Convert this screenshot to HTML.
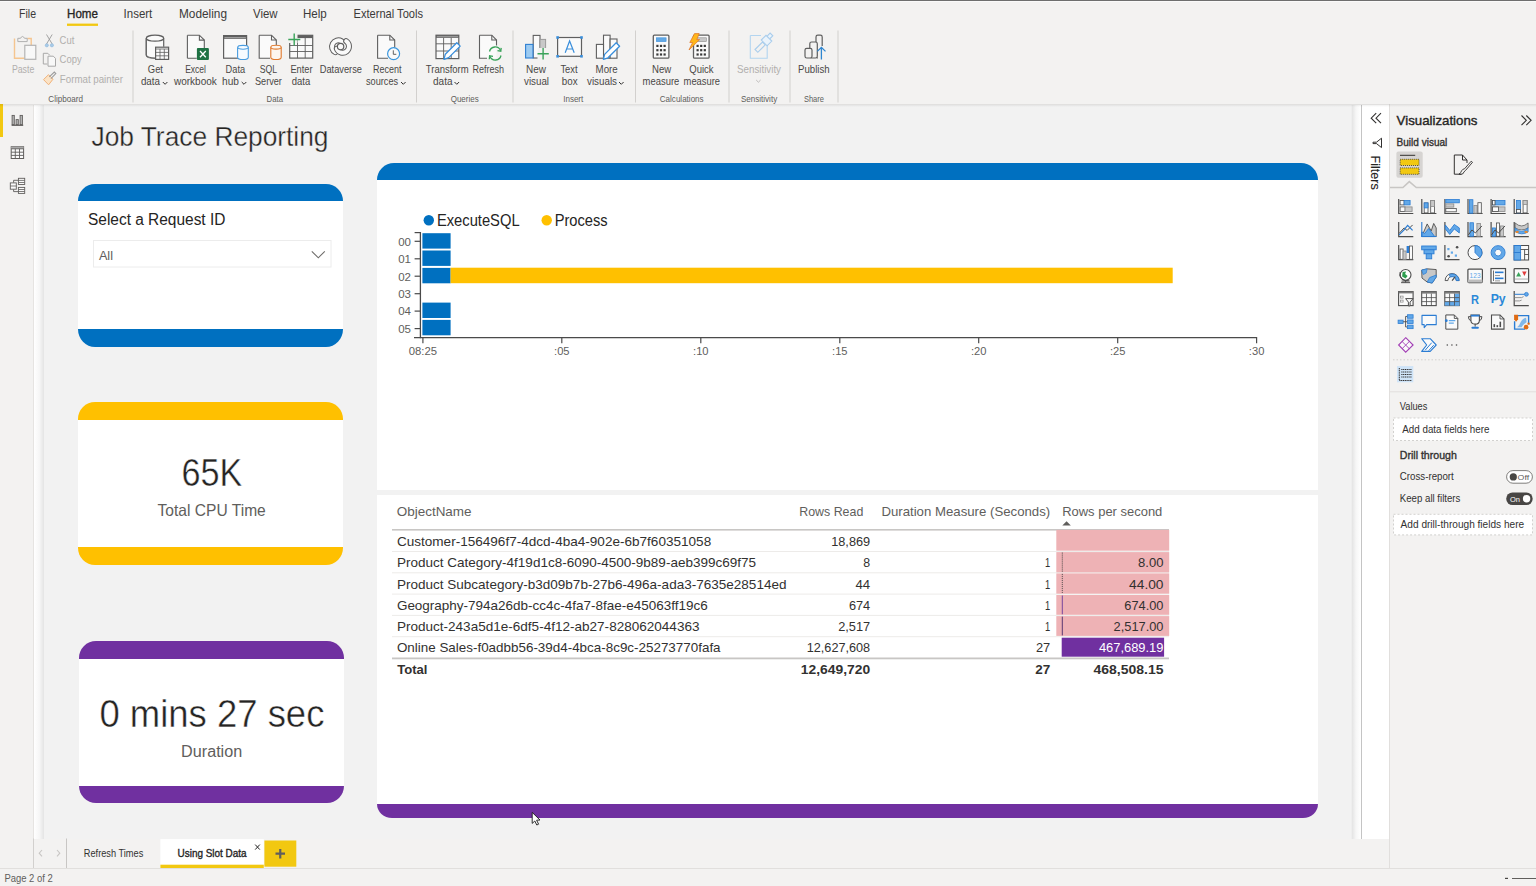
<!DOCTYPE html>
<html><head><meta charset="utf-8"><title>Job Trace Reporting - Power BI</title>
<style>
html,body{margin:0;padding:0;width:1536px;height:886px;overflow:hidden;background:#f3f2f1;font-family:"Liberation Sans", sans-serif;}
.abs{position:absolute;}
#topline{left:0;top:0;width:1536px;height:1px;background:#6e6e6e;}
#ribbon{left:0;top:1px;width:1536px;height:103px;background:#f3f2f1;border-top:1px solid #fafafa;box-sizing:border-box;}
#ribbonshadow{left:0;top:104px;width:1536px;height:3px;background:linear-gradient(rgba(0,0,0,0.09),rgba(0,0,0,0));z-index:5;}
#leftnav{left:0;top:105px;width:33px;height:763px;background:#f3f2f1;border-right:1px solid #e6e4e2;}
#navsel{left:0;top:104px;width:3px;height:33px;background:#f2c811;}
#canvasstrip{left:34px;top:105px;width:10px;height:734px;background:linear-gradient(90deg,#ffffff 0%,#f6f6f6 55%,#e6e6e6 95%,#f2f2f2 100%);}
#canvas{left:44px;top:105px;width:1308px;height:734px;background:#f2f2f2;}
#canvasR{left:1351px;top:105px;width:10px;height:734px;background:linear-gradient(90deg,#f2f2f2 0%,#e6e6e6 15%,#f6f6f6 50%,#ffffff 100%);}
#filterline{left:1361px;top:105px;width:1px;height:734px;background:#c4c4c4;}
#filters{left:1362px;top:105px;width:27px;height:734px;background:#ffffff;}
#vispane{left:1389px;top:104px;width:147px;height:764px;background:#f3f2f1;border-left:1px solid #e1dfdd;box-sizing:border-box;}
#tabbar{left:34px;top:839px;width:1355px;height:29px;background:#f3f2f1;}
#status{left:0;top:868px;width:1536px;height:18px;background:#f3f2f1;border-top:1px solid #e1dfdd;box-sizing:border-box;}
.card{position:absolute;background:#fff;box-sizing:border-box;}
#overlay{position:absolute;left:0;top:0;}
#overlay text{font-family:"Liberation Sans", sans-serif;}
</style></head><body>
<div id="topline" class="abs"></div>
<div id="ribbon" class="abs"></div>
<div id="ribbonshadow" class="abs"></div>
<div id="leftnav" class="abs"></div>
<div id="navsel" class="abs"></div>
<div id="canvasstrip" class="abs"></div>
<div id="canvas" class="abs"></div>
<div id="canvasR" class="abs"></div>
<div id="filterline" class="abs"></div>
<div id="filters" class="abs"></div>
<div id="vispane" class="abs"></div>
<div id="tabbar" class="abs"></div>
<div id="status" class="abs"></div>

<!-- slicer card -->
<div class="card" style="left:78px;top:184px;width:265px;height:163px;border-top:17.5px solid #0070c0;border-bottom:18.5px solid #0070c0;border-radius:17px 17px 17px 17px/17px 17px 18px 18px;"></div>
<!-- cpu card -->
<div class="card" style="left:78px;top:402px;width:265px;height:163px;border-top:18px solid #ffc000;border-bottom:18px solid #ffc000;border-radius:17px;"></div>
<!-- duration card -->
<div class="card" style="left:79px;top:641px;width:265px;height:162px;border-top:18px solid #7030a0;border-bottom:17px solid #7030a0;border-radius:17px;"></div>
<!-- big card -->
<div class="card" style="left:377px;top:163px;width:940.5px;height:654.5px;border-top:17.5px solid #0070c0;border-bottom:14.5px solid #7030a0;border-radius:17px 17px 15px 15px/17px 17px 14px 14px;"></div>
<div class="abs" style="left:377px;top:489.5px;width:940.5px;height:5.5px;background:#f2f2f2;"></div>

<svg id="overlay" width="1536" height="886" viewBox="0 0 1536 886">
<rect x="93.5" y="240.5" width="237.5" height="26.5" fill="#fff" stroke="#ececec" stroke-width="1"/>
<polyline points="311.8,251.3 318.3,257.8 324.8,251.3" fill="none" stroke="#6f6d6b" stroke-width="1.1"/>
<circle cx="428.8" cy="220.3" r="5.2" fill="#0070c0"/>
<circle cx="546.7" cy="220.3" r="5.2" fill="#ffc000"/>
<line x1="420.4" y1="232" x2="420.4" y2="338.2" stroke="#4a4a4a" stroke-width="1.3"/>
<line x1="414.6" y1="232.6" x2="420.4" y2="232.6" stroke="#4a4a4a" stroke-width="1.2"/>
<line x1="414" y1="337.6" x2="1256.5" y2="337.6" stroke="#4a4a4a" stroke-width="1.4"/>
<line x1="414.6" y1="241.3" x2="420.4" y2="241.3" stroke="#4a4a4a" stroke-width="1.2"/>
<line x1="414.6" y1="258.8" x2="420.4" y2="258.8" stroke="#4a4a4a" stroke-width="1.2"/>
<line x1="414.6" y1="276.2" x2="420.4" y2="276.2" stroke="#4a4a4a" stroke-width="1.2"/>
<line x1="414.6" y1="293.7" x2="420.4" y2="293.7" stroke="#4a4a4a" stroke-width="1.2"/>
<line x1="414.6" y1="311.1" x2="420.4" y2="311.1" stroke="#4a4a4a" stroke-width="1.2"/>
<line x1="414.6" y1="328.6" x2="420.4" y2="328.6" stroke="#4a4a4a" stroke-width="1.2"/>
<rect x="422.4" y="233.2" width="28.2" height="15.4" fill="#0070c0"/>
<rect x="422.4" y="250.5" width="28.2" height="15.4" fill="#0070c0"/>
<rect x="422.4" y="267.9" width="28.2" height="15.4" fill="#0070c0"/>
<rect x="422.4" y="302.6" width="28.2" height="15.4" fill="#0070c0"/>
<rect x="422.4" y="319.9" width="28.2" height="15.4" fill="#0070c0"/>
<rect x="450.6" y="267.7" width="722.1" height="15.5" fill="#ffc000"/>
<line x1="422.9" y1="337" x2="422.9" y2="343.3" stroke="#4a4a4a" stroke-width="1.2"/>
<line x1="561.8" y1="337" x2="561.8" y2="343.3" stroke="#4a4a4a" stroke-width="1.2"/>
<line x1="700.8" y1="337" x2="700.8" y2="343.3" stroke="#4a4a4a" stroke-width="1.2"/>
<line x1="839.8" y1="337" x2="839.8" y2="343.3" stroke="#4a4a4a" stroke-width="1.2"/>
<line x1="978.7" y1="337" x2="978.7" y2="343.3" stroke="#4a4a4a" stroke-width="1.2"/>
<line x1="1117.7" y1="337" x2="1117.7" y2="343.3" stroke="#4a4a4a" stroke-width="1.2"/>
<line x1="1256.6" y1="337" x2="1256.6" y2="343.3" stroke="#4a4a4a" stroke-width="1.2"/>
<polygon points="1062.3,525.4 1070.8,525.4 1066.55,521.2" fill="#605e5c"/>
<rect x="392" y="529" width="777" height="1.6" fill="#c8c6c4"/>
<rect x="392" y="551.0" width="777" height="1" fill="#edebe9"/>
<rect x="392" y="572.3" width="777" height="1" fill="#edebe9"/>
<rect x="392" y="593.6" width="777" height="1" fill="#edebe9"/>
<rect x="392" y="614.9" width="777" height="1" fill="#edebe9"/>
<rect x="392" y="636.2" width="777" height="1" fill="#edebe9"/>
<rect x="1056.3" y="529.9" width="112.9" height="20.8" fill="#eeb2b5"/>
<rect x="1056.3" y="552.1" width="112.9" height="20.3" fill="#eeb2b5"/>
<rect x="1056.3" y="573.4" width="112.9" height="20.3" fill="#eeb2b5"/>
<rect x="1056.3" y="595" width="112.9" height="19.8" fill="#eeb2b5"/>
<rect x="1056.3" y="616.1" width="112.9" height="19.8" fill="#eeb2b5"/>
<line x1="1062.3" y1="552.6" x2="1062.3" y2="571.9" stroke="#3b3b3b" stroke-width="0.9" stroke-dasharray="1,1"/>
<line x1="1062.3" y1="573.9" x2="1062.3" y2="593.2" stroke="#3b3b3b" stroke-width="0.9" stroke-dasharray="1,1"/>
<line x1="1062.3" y1="595.5" x2="1062.3" y2="614.3" stroke="#6a3a9a" stroke-width="0.9"/>
<line x1="1062.3" y1="616.6" x2="1062.3" y2="635.4" stroke="#4a2a6a" stroke-width="0.9"/>
<rect x="1061.7" y="637.7" width="102.4" height="19" fill="#7030a0"/>
<rect x="392" y="657.5" width="777" height="1.8" fill="#c8c6c4"/>
<rect x="67" y="23.6" width="31" height="2.3" fill="#f2c811"/>
<rect x="132.5" y="30.5" width="1" height="72" fill="#d2d0ce"/>
<rect x="416" y="30.5" width="1" height="72" fill="#d2d0ce"/>
<rect x="512.5" y="30.5" width="1" height="72" fill="#d2d0ce"/>
<rect x="635" y="30.5" width="1" height="72" fill="#d2d0ce"/>
<rect x="728.5" y="30.5" width="1" height="72" fill="#d2d0ce"/>
<rect x="789.5" y="30.5" width="1" height="72" fill="#d2d0ce"/>
<rect x="837.5" y="30.5" width="1" height="72" fill="#d2d0ce"/>
<polyline points="1376.2,113.2 1371.2,118.2 1376.2,123.2" fill="none" stroke="#323130" stroke-width="1.1"/>
<polyline points="1381,113.2 1376,118.2 1381,123.2" fill="none" stroke="#323130" stroke-width="1.1"/>
<path d="M1381.5,138.2 L1381.5,147.6 L1376.5,143.6 L1373,143.6 L1373,142.2 L1376.5,142.2 Z" fill="none" stroke="#323130" stroke-width="1"/>
<polyline points="1521.5,115.5 1526.3,120.3 1521.5,125.1" fill="none" stroke="#323130" stroke-width="1.1"/>
<polyline points="1526.3,115.5 1531.1,120.3 1526.3,125.1" fill="none" stroke="#323130" stroke-width="1.1"/>
<rect x="1396.4" y="151.6" width="26.3" height="26.1" rx="2" fill="#d6d4d2"/>
<rect x="1400" y="154.8" width="15.2" height="1" fill="#323130"/>
<rect x="1400.2" y="159.3" width="18.8" height="6.2" fill="#f2c811" stroke="#323130" stroke-width="0.8" stroke-dasharray="1,1"/>
<rect x="1400.2" y="167.9" width="18.8" height="6.4" fill="#f2c811" stroke="#323130" stroke-width="0.8" stroke-dasharray="1,1"/>
<path d="M1461.5,174.2 L1454.3,174.2 L1454.3,155 L1462.5,155 L1467,160 L1467,163" fill="none" stroke="#323130" stroke-width="1"/>
<path d="M1462.5,155 L1462.5,160 L1467,160" fill="none" stroke="#323130" stroke-width="1"/>
<path d="M1472.5,162.3 L1465.5,170.5 Q1463.5,171.8 1463.2,173.5 Q1461.5,174.8 1459,174.2 Q1461,172.5 1461.6,170.8 Q1462.5,169 1464.5,168.8 L1471.2,161.2 Z" fill="none" stroke="#323130" stroke-width="0.9"/>
<path d="M1390,187.5 L1402.9,187.5 L1409.3,181.6 L1416.3,187.5 L1536,187.5" fill="none" stroke="#c8c6c4" stroke-width="1.6"/>
<line x1="1393" y1="359.8" x2="1536" y2="359.8" stroke="#d2d0ce" stroke-width="1" stroke-dasharray="1.5,2"/>
<rect x="1397" y="366.1" width="16.3" height="16.2" fill="#cfe4f8"/>
<path d="M1399.3,368 L1399.3,380.5 M1399.3,380.5 L1412,380.5 M1401.3,369.5 L1411.5,369.5 M1401.3,372 L1411.5,372 M1401.3,374.5 L1411.5,374.5 M1401.3,377 L1411.5,377" stroke="#323130" stroke-width="1" stroke-dasharray="1.2,0.6"/>
<line x1="1390" y1="391.8" x2="1536" y2="391.8" stroke="#e1dfdd" stroke-width="1"/>
<rect x="1393.5" y="418" width="139" height="22.5" fill="#fff" stroke="#c8c6c4" stroke-width="0.8" stroke-dasharray="2,2"/>
<rect x="1506.6" y="470.6" width="25.8" height="12.6" rx="6.3" fill="#fff" stroke="#605e5c" stroke-width="0.8"/>
<circle cx="1513.3" cy="476.9" r="3.6" fill="#484644"/>
<rect x="1506.2" y="492.4" width="26.5" height="12.6" rx="6.3" fill="#484644"/>
<circle cx="1526.6" cy="498.7" r="3.7" fill="#fff"/>
<rect x="1393.5" y="514.3" width="139" height="20.6" fill="#fff" stroke="#c8c6c4" stroke-width="0.8" stroke-dasharray="2,2"/>
<rect x="33" y="838.5" width="1" height="29.5" fill="#d2d0ce"/>
<polyline points="42,850 39.2,853.2 42,856.4" fill="none" stroke="#c8c6c4" stroke-width="1.1"/>
<polyline points="57,850 59.8,853.2 57,856.4" fill="none" stroke="#c8c6c4" stroke-width="1.1"/>
<rect x="66" y="838.5" width="1" height="29.5" fill="#c8c6c4"/>
<rect x="160.4" y="839.1" width="103.4" height="28.9" fill="#ffffff"/>
<rect x="160.4" y="864.7" width="103.4" height="3.3" fill="#f2c811"/>
<path d="M255.2,844.6 L259.8,849.6 M259.8,844.6 L255.2,849.6" stroke="#252423" stroke-width="1"/>
<rect x="264.4" y="840.5" width="31.9" height="26.2" fill="#f2c811"/>
<path d="M275.5,853.7 L285,853.7 M280.25,849 L280.25,858.4" stroke="#605e5c" stroke-width="2.2"/>
<rect x="1505" y="877.8" width="3" height="1.2" fill="#484644"/>
<rect x="1512" y="878" width="24" height="1" fill="#605e5c"/>
<path d="M532.2,812.4 L532.2,823.4 L534.8,821 L536.8,825 L538.6,824.2 L536.6,820.2 L540,820 Z" fill="#fff" stroke="#1a1a1a" stroke-width="0.9" stroke-linejoin="round"/>
<path d="M14.5,38.5 L14.5,58.2 L24.6,58.2 M31.2,45 L31.2,38.5 L27.3,38.5" fill="none" stroke="#f5c58f" stroke-width="1.4"/>
<path d="M17.8,41.6 L27.2,41.6 L27.2,38.3 L24.5,38.3 Q22.5,34.6 20.5,38.3 L17.8,38.3 Z" fill="#f3f2f1" stroke="#b0b0b0" stroke-width="1"/>
<rect x="24.8" y="45.3" width="11" height="14" fill="#f8f8f8" stroke="#b3b3b3" stroke-width="1.2"/>
<path d="M46.5,34.5 L52.2,44 M52.2,34.5 L46.5,44" stroke="#9a9a9a" stroke-width="0.9" fill="none"/>
<circle cx="46.8" cy="45.3" r="1.6" fill="#a9cbe8" stroke="#8fb8de" stroke-width="0.6"/><circle cx="51.9" cy="45.3" r="1.6" fill="#a9cbe8" stroke="#8fb8de" stroke-width="0.6"/>
<path d="M43.3,53.3 L47.8,53.3 L49.8,55.3 M47.3,64 L43.3,64 L43.3,53.3" fill="none" stroke="#a8a8a8" stroke-width="1"/>
<path d="M48,56.2 L53.3,56.2 L55.5,58.4 L55.5,66.2 L48,66.2 Z" fill="#f8f8f8" stroke="#a8a8a8" stroke-width="1"/>
<path d="M43.5,79.6 L48.5,74.7 L53,79.2 L48.6,84.8 Z" fill="#fbe3c6" stroke="#f0b27a" stroke-width="1"/>
<path d="M49.3,76.9 L54.3,72 L55.8,73.6 L50.9,78.6" fill="none" stroke="#9c9c9c" stroke-width="1.1"/>
<path d="M146.3,38.2 L146.3,55.2 Q146.3,58.2 155.2,58.2" fill="#fafafa" stroke="#5f5f5f" stroke-width="1.2"/>
<path d="M146.3,38.2 L146.3,55.2 Q147,58 155,58.2 L155,46.8 L163.7,46.8 L163.7,38.2 Z" fill="#fafafa"/>
<ellipse cx="155" cy="38.2" rx="8.7" ry="3" fill="#fafafa" stroke="#5f5f5f" stroke-width="1.2"/>
<path d="M146.3,38.2 L146.3,55.2 Q147,57.8 155,58.2 M163.7,38.2 L163.7,46.8" fill="none" stroke="#5f5f5f" stroke-width="1.2"/>
<rect x="155.6" y="47.2" width="13" height="12.2" fill="#fafafa" stroke="#5f5f5f" stroke-width="1.2"/>
<path d="M155.6,49 L168.6,49 M155.6,52.4 L168.6,52.4 M155.6,55.8 L168.6,55.8 M160,49 L160,59.4 M164.3,49 L164.3,59.4" stroke="#5f5f5f" stroke-width="0.8"/>
<path d="M187.4,35.2 L199.4,35.2 L204.3,40.1 L204.3,58.2 L187.4,58.2 Z" fill="#fafafa"/><path d="M187.4,35.2 L199.4,35.2 L204.3,40.1 L204.3,48 M196.8,58.2 L187.4,58.2" fill="none" stroke="#5f5f5f" stroke-width="1.1"/>
<path d="M187.4,35.2 L187.4,58.2" stroke="#5f5f5f" stroke-width="1.1"/><path d="M199.4,35.2 L199.4,40.1 L204.3,40.1" fill="none" stroke="#5f5f5f" stroke-width="1.1"/>
<rect x="196.9" y="48" width="12" height="12" rx="1" fill="#1f7244"/>
<path d="M200,51 L205.8,57.2 M205.8,51 L200,57.2" stroke="#fff" stroke-width="1.3"/>
<rect x="223.6" y="35.6" width="23" height="22.6" fill="#fafafa" stroke="#5f5f5f" stroke-width="1.2"/>
<rect x="223.6" y="35.6" width="23" height="3.2" fill="#5f5f5f"/><rect x="224.4" y="37" width="21.4" height="0.8" fill="#b0b0b0"/>
<path d="M237.6,47.3 L237.6,57.2 Q237.6,59.5 243,59.5 Q248.3,59.5 248.3,57.2 L248.3,47.3" fill="#f7fbff" stroke="#4a9de0" stroke-width="1.1"/>
<ellipse cx="243" cy="47.3" rx="5.3" ry="1.9" fill="#f7fbff" stroke="#4a9de0" stroke-width="1.1"/>
<path d="M259.2,35.2 L271.5,35.2 L276.3,40 L276.3,58.2 L259.2,58.2 Z" fill="#fafafa"/><path d="M259.2,35.2 L271.5,35.2 L276.3,40 L276.3,45 M270,58.2 L259.2,58.2 L259.2,35.2" fill="none" stroke="#5f5f5f" stroke-width="1.1"/>
<path d="M271.5,35.2 L271.5,40 L276.3,40" fill="none" stroke="#5f5f5f" stroke-width="1.1"/>
<path d="M270.8,47.2 L270.8,57.2 Q270.8,59.5 276,59.5 Q281.2,59.5 281.2,57.2 L281.2,47.2" fill="#fdf6ef" stroke="#e07a2e" stroke-width="1.1"/>
<ellipse cx="276" cy="47.2" rx="5.2" ry="1.9" fill="#fdf6ef" stroke="#e07a2e" stroke-width="1.1"/>
<rect x="289.7" y="35.3" width="23" height="22.8" fill="#fafafa" stroke="#5f5f5f" stroke-width="1.2"/>
<rect x="296" y="35.3" width="16.7" height="2.8" fill="#5f5f5f"/>
<path d="M289.7,45.5 L312.7,45.5 M289.7,51.5 L312.7,51.5 M297.5,40 L297.5,58.1 M305.2,38 L305.2,58.1" stroke="#5f5f5f" stroke-width="0.9"/>
<rect x="288.5" y="34" width="9" height="9" fill="#f3f2f1"/>
<path d="M288.3,39.5 L300.3,39.5 M294.2,33.5 L294.2,45.5" stroke="#3aa35a" stroke-width="1.4"/>
<path d="M335.4,52.2 A6.3,6.3 0 1 1 343.8,49.8" fill="none" stroke="#5f5f5f" stroke-width="6" stroke-linecap="round"/>
<path d="M335.4,52.2 A6.3,6.3 0 1 1 343.8,49.8" fill="none" stroke="#fafafa" stroke-width="4" stroke-linecap="round"/>
<path d="M346.2,41.2 A6.3,6.3 0 1 1 336.8,48.7" fill="none" stroke="#5f5f5f" stroke-width="6" stroke-linecap="round"/>
<path d="M346.2,41.2 A6.3,6.3 0 1 1 336.8,48.7" fill="none" stroke="#fafafa" stroke-width="4" stroke-linecap="round"/>
<circle cx="340.6" cy="46.6" r="3.2" fill="#fafafa" stroke="#5f5f5f" stroke-width="1.2"/>
<path d="M377.6,35.2 L389.8,35.2 L394.7,40 L394.7,58.2 L377.6,58.2 Z" fill="#fafafa"/><path d="M377.6,35.2 L389.8,35.2 L394.7,40 L394.7,47.5 M388,58.2 L377.6,58.2 L377.6,35.2" fill="none" stroke="#5f5f5f" stroke-width="1.1"/>
<path d="M389.8,35.2 L389.8,40 L394.7,40" fill="none" stroke="#5f5f5f" stroke-width="1.1"/>
<circle cx="393.6" cy="53.7" r="6" fill="#fafafa" stroke="#3a96dd" stroke-width="1.2"/>
<path d="M393.3,50.3 L393.3,54.3 L396.3,54.3" fill="none" stroke="#5f5f5f" stroke-width="1"/>
<rect x="436" y="35.2" width="22.8" height="23.4" fill="#fafafa" stroke="#5f5f5f" stroke-width="1.2"/>
<rect x="436" y="35.2" width="22.8" height="2.6" fill="#5f5f5f"/><rect x="436.8" y="36.3" width="21.2" height="0.7" fill="#b0b0b0"/>
<path d="M436,43.8 L458.8,43.8 M436,51 L458.8,51 M443.6,37.8 L443.6,58.6 M451.2,37.8 L451.2,58.6" stroke="#5f5f5f" stroke-width="0.9"/>
<path d="M444,59.4 L445.3,54.2 L456.8,42.7 L460.2,46.1 L448.7,57.6 Z" fill="#fff" stroke="#3a8fdc" stroke-width="1.3" stroke-linejoin="round"/>
<path d="M479.5,35.2 L491.8,35.2 L496.5,40 L496.5,58.3 L479.5,58.3 Z" fill="#fafafa"/><path d="M479.5,35.2 L491.8,35.2 L496.5,40 L496.5,45.5 M487,58.3 L479.5,58.3 L479.5,35.2" fill="none" stroke="#5f5f5f" stroke-width="1.1"/>
<path d="M491.8,35.2 L491.8,40 L496.5,40" fill="none" stroke="#5f5f5f" stroke-width="1.1"/>
<path d="M489.5,51.5 A5.8,5.8 0 0 1 500.5,50.5 M501,55.5 A5.8,5.8 0 0 1 490,56.5" fill="none" stroke="#3aa35a" stroke-width="1.3"/>
<path d="M501.2,47.8 L500.8,51.2 L497.5,50.6 M489.3,59.2 L489.6,55.8 L493,56.3" fill="none" stroke="#3aa35a" stroke-width="1.3"/>
<rect x="533.2" y="35.4" width="6.8" height="22.6" fill="#fafafa" stroke="#5f5f5f" stroke-width="1.1"/>
<rect x="540" y="39.4" width="5.6" height="18.6" fill="#c8c8c8" stroke="#9a9a9a" stroke-width="1"/>
<rect x="525.6" y="44.4" width="7.4" height="13.6" fill="#9ccbf2" stroke="#2f7fd1" stroke-width="1.1"/>
<rect x="537.5" y="48" width="11" height="11" fill="#f3f2f1"/>
<path d="M537.5,53.7 L548.8,53.7 M543.1,48 L543.1,59.5" stroke="#3aa35a" stroke-width="1.4"/>
<rect x="557.6" y="37.5" width="23.9" height="18.8" fill="#fafafa" stroke="#5f5f5f" stroke-width="1.2"/>
<rect x="556.3" y="36.2" width="2.6" height="2.6" fill="#3a8fdc"/><rect x="580.2" y="36.2" width="2.6" height="2.6" fill="#3a8fdc"/><rect x="556.3" y="55" width="2.6" height="2.6" fill="#3a8fdc"/><rect x="580.2" y="55" width="2.6" height="2.6" fill="#3a8fdc"/>
<path d="M565.2,52.7 L569.6,41 L574.2,52.7 M566.6,49 L572.8,49" fill="none" stroke="#3a8fdc" stroke-width="1.2"/>
<rect x="603.5" y="35.2" width="6.6" height="23" fill="#fafafa" stroke="#5f5f5f" stroke-width="1.1"/>
<rect x="596.4" y="44.4" width="7.1" height="13.8" fill="#fafafa" stroke="#5f5f5f" stroke-width="1.1"/>
<rect x="610.1" y="39" width="6.9" height="19.2" fill="#fafafa" stroke="#5f5f5f" stroke-width="1.1"/>
<path d="M603.4,59.4 L604.6,54.4 L616.2,42.8 L619.6,46.2 L608,57.8 Z" fill="#fff" stroke="#3a8fdc" stroke-width="1.3" stroke-linejoin="round"/>
<rect x="653.3" y="35.2" width="15.6" height="23" rx="1" fill="#fafafa" stroke="#5f5f5f" stroke-width="1.3"/>
<rect x="656.3" y="37.8" width="9.8" height="3.8" fill="#62a8e5" stroke="#3a8fdc" stroke-width="0.6"/>
<rect x="656.3" y="44.8" width="2.2" height="2.2" fill="#3a3a3a"/>
<rect x="659.9" y="44.8" width="2.2" height="2.2" fill="#3a3a3a"/>
<rect x="663.5" y="44.8" width="2.2" height="2.2" fill="#3a3a3a"/>
<rect x="656.3" y="49.1" width="2.2" height="2.2" fill="#3a3a3a"/>
<rect x="659.9" y="49.1" width="2.2" height="2.2" fill="#3a3a3a"/>
<rect x="663.5" y="49.1" width="2.2" height="2.2" fill="#3a3a3a"/>
<rect x="656.3" y="53.4" width="2.2" height="2.2" fill="#3a3a3a"/>
<rect x="659.9" y="53.4" width="2.2" height="2.2" fill="#3a3a3a"/>
<rect x="663.5" y="53.4" width="2.2" height="2.2" fill="#3a3a3a"/>
<rect x="693.5" y="35.2" width="15.6" height="23" rx="1" fill="#fafafa" stroke="#5f5f5f" stroke-width="1.3"/>
<rect x="696.5" y="37.8" width="9.8" height="3.8" fill="#c8c8c8" stroke="#8a8a8a" stroke-width="0.6"/>
<rect x="696.5" y="44.8" width="2.2" height="2.2" fill="#3a3a3a"/>
<rect x="700.1" y="44.8" width="2.2" height="2.2" fill="#3a3a3a"/>
<rect x="703.7" y="44.8" width="2.2" height="2.2" fill="#3a3a3a"/>
<rect x="696.5" y="49.1" width="2.2" height="2.2" fill="#3a3a3a"/>
<rect x="700.1" y="49.1" width="2.2" height="2.2" fill="#3a3a3a"/>
<rect x="703.7" y="49.1" width="2.2" height="2.2" fill="#3a3a3a"/>
<rect x="696.5" y="53.4" width="2.2" height="2.2" fill="#3a3a3a"/>
<rect x="700.1" y="53.4" width="2.2" height="2.2" fill="#3a3a3a"/>
<rect x="703.7" y="53.4" width="2.2" height="2.2" fill="#3a3a3a"/>
<path d="M694.5,33.6 L699.2,33.6 L696.8,39.6 L699.6,39.6 L689,50 L692.6,42.5 L689.8,42.5 Z" fill="#ffb619" stroke="#e07a2e" stroke-width="0.8" stroke-linejoin="round"/>
<path d="M750.3,35.5 L761,35.5 M767.2,46 L767.2,58.2 L750.3,58.2 L750.3,35.5" fill="none" stroke="#b3d5f0" stroke-width="1.1"/>
<path d="M755,49.5 L762.5,42 L765.3,44.8 L757.8,52.3 Z" fill="none" stroke="#a9cdec" stroke-width="1.1"/>
<path d="M761.3,40 L766,35.3 L771.8,41.1 L767.1,45.8 Z M767.4,35.8 L770.1,33.1 L772.8,35.8 L770.1,38.5" fill="#eaf3fb" stroke="#a9cdec" stroke-width="1.1"/>
<path d="M756.2,80 L758.4,82.2 L760.6,80" fill="none" stroke="#b8b6b4" stroke-width="0.9"/>
<rect x="816" y="35.2" width="6.2" height="22.8" rx="1.8" fill="none" stroke="#5f5f5f" stroke-width="1.2"/>
<rect x="809.8" y="42" width="7.5" height="16" rx="1.8" fill="#f3f2f1" stroke="#5f5f5f" stroke-width="1.2"/>
<rect x="805" y="48.3" width="7" height="9.7" rx="1.8" fill="#f3f2f1" stroke="#5f5f5f" stroke-width="1.2"/>
<rect x="818" y="46" width="7" height="14" fill="#f3f2f1"/>
<path d="M821.4,59.5 L821.4,47.3 M817.3,51.4 L821.4,47.3 L825.5,51.4" fill="none" stroke="#2f86d0" stroke-width="1.3"/>
<path d="M162.8,82 L165.10000000000002,84.3 L167.4,82" fill="none" stroke="#323130" stroke-width="1"/>
<path d="M241.7,82 L244.0,84.3 L246.29999999999998,82" fill="none" stroke="#323130" stroke-width="1"/>
<path d="M401,82 L403.3,84.3 L405.6,82" fill="none" stroke="#323130" stroke-width="1"/>
<path d="M454.5,82 L456.8,84.3 L459.1,82" fill="none" stroke="#323130" stroke-width="1"/>
<path d="M619,82 L621.3,84.3 L623.6,82" fill="none" stroke="#323130" stroke-width="1"/>
<rect x="11.6" y="124.6" width="11.6" height="1.3" fill="#605e5c"/>
<rect x="12.1" y="115.4" width="2.2" height="9.2" fill="#b8b8b8" stroke="#605e5c" stroke-width="0.9"/>
<rect x="16.1" y="119.6" width="2.2" height="5" fill="#b8b8b8" stroke="#605e5c" stroke-width="0.9"/>
<rect x="20.1" y="115.4" width="2.3" height="9.2" fill="#b8b8b8" stroke="#605e5c" stroke-width="0.9"/>
<rect x="11.2" y="146.7" width="12.4" height="11.8" fill="#fafafa" stroke="#605e5c" stroke-width="1"/>
<rect x="11.2" y="146.7" width="12.4" height="2" fill="#a8a8a8"/>
<path d="M11.2,148.8 L23.6,148.8 M11.2,152.2 L23.6,152.2 M11.2,155.4 L23.6,155.4 M15.3,148.8 L15.3,158.5 M19.5,148.8 L19.5,158.5" stroke="#605e5c" stroke-width="0.9"/>
<path d="M13.6,182.7 L13.6,180.3 L18.2,180.3 M13.6,189.3 L13.6,191.6 L18.2,191.6" fill="none" stroke="#605e5c" stroke-width="0.9"/>
<rect x="10.3" y="182.9" width="6" height="6.3" fill="#fafafa" stroke="#605e5c" stroke-width="0.9"/><path d="M10.3,186 L16.3,186" stroke="#605e5c" stroke-width="0.8"/>
<rect x="18.4" y="178.3" width="6.3" height="6.2" fill="#fafafa" stroke="#605e5c" stroke-width="0.9"/><path d="M18.4,180.4 L24.7,180.4 M18.4,182.5 L24.7,182.5" stroke="#605e5c" stroke-width="0.8"/>
<rect x="18.4" y="187.4" width="6.3" height="6" fill="#fafafa" stroke="#605e5c" stroke-width="0.9"/><path d="M18.4,189.5 L24.7,189.5 M18.4,191.5 L24.7,191.5" stroke="#605e5c" stroke-width="0.8"/>
<g transform="translate(1398.10,198.90)"><path d="M0.6,0 L0.6,14.6 L15.2,14.6" fill="none" stroke="#4d4d4d" stroke-width="1.2"/><rect x="2" y="1.5" width="4" height="4.5" fill="#fafafa" stroke="#4d4d4d" stroke-width="0.8"/><rect x="6" y="1.5" width="6" height="4.5" fill="#62a8e8" stroke="#2b7cd3" stroke-width="0.8"/><rect x="2" y="8" width="5" height="4.5" fill="#fafafa" stroke="#4d4d4d" stroke-width="0.8"/><rect x="7" y="8" width="7" height="4.5" fill="#c8c8c8" stroke="#8a8a8a" stroke-width="0.8"/></g>
<g transform="translate(1421.20,198.90)"><path d="M0.6,0 L0.6,14.6 L15.2,14.6" fill="none" stroke="#4d4d4d" stroke-width="1.2"/><rect x="3" y="4" width="3.8" height="10" fill="#fafafa" stroke="#4d4d4d" stroke-width="0.8"/><rect x="3" y="4" width="3.8" height="5" fill="#62a8e8" stroke="#2b7cd3" stroke-width="0.8"/><rect x="9.5" y="1.5" width="3.8" height="12.5" fill="#fafafa" stroke="#4d4d4d" stroke-width="0.8"/><rect x="9.5" y="1.5" width="3.8" height="6" fill="#c8c8c8" stroke="#8a8a8a" stroke-width="0.8"/></g>
<g transform="translate(1444.30,198.90)"><path d="M0.6,0 L0.6,14.6 L15.2,14.6" fill="none" stroke="#4d4d4d" stroke-width="1.2"/><rect x="1.5" y="0.6" width="13.5" height="3.3" fill="#62a8e8" stroke="#2b7cd3" stroke-width="0.8"/><rect x="1.5" y="5" width="8" height="3.2" fill="#c8c8c8" stroke="#8a8a8a" stroke-width="0.8"/><rect x="1.5" y="9.6" width="10.5" height="3.3" fill="#fafafa" stroke="#4d4d4d" stroke-width="0.8"/></g>
<g transform="translate(1467.40,198.90)"><path d="M0.6,0 L0.6,14.6 L15.2,14.6" fill="none" stroke="#4d4d4d" stroke-width="1.2"/><rect x="2" y="0.8" width="3.5" height="13.5" fill="#62a8e8" stroke="#2b7cd3" stroke-width="0.8"/><rect x="6.5" y="6.5" width="3.2" height="7.8" fill="#c8c8c8" stroke="#8a8a8a" stroke-width="0.8"/><rect x="10.5" y="3.8" width="3.4" height="10.5" fill="#fafafa" stroke="#4d4d4d" stroke-width="0.8"/></g>
<g transform="translate(1490.50,198.90)"><path d="M0.6,0 L0.6,14.6 L15.2,14.6" fill="none" stroke="#4d4d4d" stroke-width="1.2"/><rect x="2" y="1.5" width="12.5" height="4.5" fill="#62a8e8" stroke="#2b7cd3" stroke-width="0.8"/><rect x="2" y="1.5" width="2.5" height="4.5" fill="#fafafa" stroke="#4d4d4d" stroke-width="0.8"/><rect x="2" y="8" width="12.5" height="4.5" fill="#c8c8c8" stroke="#8a8a8a" stroke-width="0.8"/><rect x="2" y="8" width="6" height="4.5" fill="#fafafa" stroke="#4d4d4d" stroke-width="0.8"/></g>
<g transform="translate(1513.60,198.90)"><path d="M0.6,0 L0.6,14.6 L15.2,14.6" fill="none" stroke="#4d4d4d" stroke-width="1.2"/><rect x="3" y="1.5" width="4" height="12.5" fill="#62a8e8" stroke="#2b7cd3" stroke-width="0.8"/><rect x="3" y="10.5" width="4" height="3.5" fill="#fafafa" stroke="#4d4d4d" stroke-width="0.8"/><rect x="9.5" y="1.5" width="4" height="12.5" fill="#fafafa" stroke="#4d4d4d" stroke-width="0.8"/><rect x="9.5" y="1.5" width="4" height="4" fill="#c8c8c8" stroke="#8a8a8a" stroke-width="0.8"/></g>
<g transform="translate(1398.10,221.95)"><path d="M0.6,0 L0.6,14.6 L15.2,14.6" fill="none" stroke="#4d4d4d" stroke-width="1.2"/><polyline points="1,11.5 6,6 9,8.5 14.5,3" fill="none" stroke="#4d4d4d" stroke-width="1"/><polyline points="1,13 6,8 9.5,3.5 14.5,8.5" fill="none" stroke="#2b7cd3" stroke-width="1.2"/></g>
<g transform="translate(1421.20,221.95)"><path d="M0.5,14.6 L6,2 L10,9 L12.5,1.5 L15,6 L15,14.6 Z" fill="#c8c8c8" stroke="#4d4d4d" stroke-width="0.9"/><path d="M0.5,14.6 L0.5,10 L3.5,11.5 L7.5,6.5 L13.5,14.6 Z" fill="#62a8e8" stroke="#2b7cd3" stroke-width="0.9"/><path d="M0.6,0 L0.6,14.6 L15.2,14.6" fill="none" stroke="#2b7cd3" stroke-width="1.1"/></g>
<g transform="translate(1444.30,221.95)"><path d="M0.6,0 L0.6,14.6 L15.2,14.6" fill="none" stroke="#4d4d4d" stroke-width="1.2"/><path d="M1,3 L5.5,8.5 L10,2.5 L15,6 L15,11 L10,7 L5.5,12.5 L1,7 Z" fill="#62a8e8" stroke="#2b7cd3" stroke-width="0.9"/></g>
<g transform="translate(1467.40,221.95)"><path d="M0.6,0 L0.6,14.6 L15.2,14.6" fill="none" stroke="#4d4d4d" stroke-width="1.2"/><rect x="2.5" y="0.8" width="3.5" height="13.5" fill="#62a8e8" stroke="#2b7cd3" stroke-width="0.8"/><rect x="9.5" y="1.5" width="3.5" height="12.8" fill="#c8c8c8" stroke="#8a8a8a" stroke-width="0.8"/><polyline points="1,13 4.5,8 8,11 14.5,4" fill="none" stroke="#4d4d4d" stroke-width="1"/></g>
<g transform="translate(1490.50,221.95)"><path d="M0.6,0 L0.6,14.6 L15.2,14.6" fill="none" stroke="#4d4d4d" stroke-width="1.2"/><rect x="2" y="6" width="3" height="8.3" fill="#62a8e8" stroke="#2b7cd3" stroke-width="0.8"/><rect x="6" y="1" width="3" height="13.3" fill="#fafafa" stroke="#4d4d4d" stroke-width="0.8"/><rect x="10" y="4" width="3" height="10.3" fill="#c8c8c8" stroke="#8a8a8a" stroke-width="0.8"/><polyline points="1,13 4.5,8 8,11 14.5,4" fill="none" stroke="#4d4d4d" stroke-width="1"/></g>
<g transform="translate(1513.60,221.95)"><path d="M0.6,0 L0.6,14.6 L15.2,14.6" fill="none" stroke="#4d4d4d" stroke-width="1.2"/><path d="M1.5,1 Q8,7 14.5,1 L14.5,6 Q8,10 1.5,6 Z" fill="#c8c8c8" stroke="#4d4d4d" stroke-width="0.7"/><path d="M1.5,6 Q8,13 14.5,6 L14.5,10 Q8,14 1.5,9.5 Z" fill="#62a8e8" stroke="#2b7cd3" stroke-width="0.8"/><rect x="2" y="9" width="3" height="2" fill="#e8892d"/><rect x="11" y="9" width="3" height="2" fill="#e8892d"/></g>
<g transform="translate(1398.10,245.00)"><path d="M0.6,0 L0.6,14.6 L15.2,14.6" fill="none" stroke="#4d4d4d" stroke-width="1.2"/><rect x="2" y="4" width="3" height="10.3" fill="#fafafa" stroke="#4d4d4d" stroke-width="0.8"/><rect x="5" y="6" width="3" height="8.3" fill="#c8c8c8" stroke="#8a8a8a" stroke-width="0.8"/><rect x="8.5" y="1" width="2.5" height="7" fill="#2b7cd3"/><rect x="11.5" y="1" width="3" height="13.3" fill="#fafafa" stroke="#4d4d4d" stroke-width="0.8"/></g>
<g transform="translate(1421.20,245.00)"><rect x="0.5" y="1" width="14.5" height="3.8" fill="#62a8e8" stroke="#2b7cd3" stroke-width="0.9"/><rect x="2.8" y="4.8" width="10" height="4" fill="#62a8e8" stroke="#2b7cd3" stroke-width="0.9"/><rect x="5" y="8.8" width="5.5" height="5" fill="#62a8e8" stroke="#2b7cd3" stroke-width="0.9"/></g>
<g transform="translate(1444.30,245.00)"><path d="M0.6,0 L0.6,14.6 L15.2,14.6" fill="none" stroke="#4d4d4d" stroke-width="1.2"/><rect x="11.5" y="1" width="2.6" height="2.6" rx="1.3" fill="#4d4d4d"/><rect x="3" y="3" width="2.2" height="2.2" fill="#62a8e8"/><rect x="6.5" y="6.5" width="2.2" height="2.2" fill="#62a8e8"/><rect x="3" y="10" width="2.6" height="2.6" rx="1.3" fill="#4d4d4d"/><rect x="10.5" y="9.5" width="2.2" height="2.2" fill="#62a8e8"/></g>
<g transform="translate(1467.40,245.00)"><circle cx="7.6" cy="7.6" r="7" fill="#fafafa" stroke="#4d4d4d" stroke-width="1"/><path d="M7.6,7.6 L7.6,0.6 A7,7 0 0 1 12.5,12.6 Z" fill="#62a8e8" stroke="#2b7cd3" stroke-width="0.9"/></g>
<g transform="translate(1490.50,245.00)"><circle cx="7.6" cy="7.6" r="5.2" fill="none" stroke="#62a8e8" stroke-width="3.4"/><circle cx="7.6" cy="7.6" r="7" fill="none" stroke="#2b7cd3" stroke-width="0.9"/><circle cx="7.6" cy="7.6" r="3.4" fill="#fafafa" stroke="#2b7cd3" stroke-width="0.9"/></g>
<g transform="translate(1513.60,245.00)"><rect x="0.5" y="0.5" width="14.5" height="14.5" fill="#fafafa" stroke="#4d4d4d" stroke-width="1"/><rect x="0.5" y="0.5" width="6.5" height="7" fill="#62a8e8" stroke="#2b7cd3" stroke-width="0.9"/><rect x="0.5" y="7.5" width="6.5" height="7.5" fill="#62a8e8" stroke="#2b7cd3" stroke-width="0.9"/><path d="M7,4.5 L15,4.5 M11,4.5 L11,15 M11,9.5 L15,9.5" stroke="#4d4d4d" stroke-width="0.9"/></g>
<g transform="translate(1398.10,268.05)"><circle cx="7.5" cy="6.8" r="5.4" fill="#fff" stroke="#4d4d4d" stroke-width="1.1"/><path d="M4.5,4 L8,3.5 L7,6 L9.5,8 L7.5,10.5 L4,8.5 Z" fill="#2e9e4f"/><path d="M3.5,13 L11.5,13 M7.5,12.2 L7.5,14.5 M3,14.6 L12,14.6" stroke="#4d4d4d" stroke-width="1"/><path d="M2,4 A6.5,6.5 0 0 0 11,12" fill="none" stroke="#4d4d4d" stroke-width="1"/></g>
<g transform="translate(1421.20,268.05)"><path d="M0.5,2 L6,0.8 L15,1.5 L15,9 L11,15 L6,14 L0.8,10 Z" fill="#c8c8c8" stroke="#4d4d4d" stroke-width="0.9"/><path d="M0.5,2 L6,0.8 L5,5 L2,6.5 Z" fill="#62a8e8" stroke="#2b7cd3" stroke-width="0.7"/><path d="M15,7 L15,9 L11,15 L6,14 L8.5,9.5 Z" fill="#62a8e8" stroke="#2b7cd3" stroke-width="0.8"/></g>
<g transform="translate(1444.30,268.05)"><path d="M0.8,12.5 A7,7 0 0 1 14.8,12.5 L12,12.5 A4.2,4.2 0 0 0 3.6,12.5 Z" fill="#fafafa" stroke="#4d4d4d" stroke-width="0.9"/><path d="M5,6.5 A7,7 0 0 1 14.8,12.5 L12,12.5 A4.2,4.2 0 0 0 6,9 Z" fill="#62a8e8" stroke="#2b7cd3" stroke-width="0.9"/><path d="M7.8,12.5 L11,8.5" stroke="#4d4d4d" stroke-width="1.2"/></g>
<g transform="translate(1467.40,268.05)"><rect x="0.5" y="1" width="14.5" height="13.5" rx="1" fill="#fafafa" stroke="#4d4d4d" stroke-width="1.2"/><rect x="0.5" y="11.5" width="14.5" height="3" fill="#bdbdbd"/><text x="7.7" y="10" font-size="7" fill="#62a8e8" text-anchor="middle" textLength="11" lengthAdjust="spacingAndGlyphs" style="font-family:Liberation Sans">123</text></g>
<g transform="translate(1490.50,268.05)"><rect x="0.5" y="0.5" width="14.5" height="14.5" fill="#fafafa" stroke="#4d4d4d" stroke-width="1.2"/><path d="M3,2.5 L3,13" stroke="#4d4d4d" stroke-width="0.8"/><rect x="4.5" y="3.5" width="8.5" height="1.6" fill="#2b7cd3"/><rect x="4.5" y="7" width="5" height="1" fill="#9a9a9a"/><rect x="4.5" y="9.5" width="8.5" height="1.6" fill="#2b7cd3"/><rect x="4.5" y="12.3" width="5" height="1" fill="#9a9a9a"/></g>
<g transform="translate(1513.60,268.05)"><rect x="0.5" y="0.5" width="14.5" height="14" rx="0.8" fill="#fafafa" stroke="#4d4d4d" stroke-width="1.2"/><path d="M2.5,8.5 L5,4 L7.5,8.5 Z" fill="#3aa35a"/><path d="M8.5,3.5 L13,3.5 L10.75,8 Z" fill="#e03a3a"/><path d="M1,11 L15,11" stroke="#9a9a9a" stroke-width="0.8"/></g>
<g transform="translate(1398.10,291.10)"><rect x="0.5" y="0.5" width="14.5" height="14" fill="#fafafa" stroke="#4d4d4d" stroke-width="1.1"/><rect x="0.5" y="0.5" width="14.5" height="1.8" fill="#7a7a7a"/><rect x="2.5" y="5" width="2.5" height="2" fill="none" stroke="#8a8a8a" stroke-width="0.7"/><rect x="2.5" y="9" width="2.5" height="2" fill="none" stroke="#8a8a8a" stroke-width="0.7"/><path d="M7.5,7.5 L15,7.5 L12,11 L12,14.8 L10.3,14.8 L10.3,11 Z" fill="#fafafa" stroke="#4d4d4d" stroke-width="1"/></g>
<g transform="translate(1421.20,291.10)"><rect x="0.5" y="0.5" width="14.5" height="14" fill="#fafafa" stroke="#4d4d4d" stroke-width="1.1"/><rect x="0.5" y="0.5" width="14.5" height="2" fill="#7a7a7a"/><path d="M0.5,6.5 L15,6.5 M0.5,10.5 L15,10.5 M5.3,2.5 L5.3,14.5 M10.2,2.5 L10.2,14.5" stroke="#4d4d4d" stroke-width="0.8"/></g>
<g transform="translate(1444.30,291.10)"><rect x="0.5" y="0.5" width="14.5" height="14" fill="#fafafa" stroke="#4d4d4d" stroke-width="1.1"/><rect x="10.2" y="2.5" width="4.8" height="12" fill="#62a8e8"/><rect x="0.5" y="10.5" width="14.5" height="4" fill="#62a8e8"/><rect x="0.5" y="0.5" width="14.5" height="2" fill="#7a7a7a"/><path d="M0.5,6.5 L15,6.5 M0.5,10.5 L15,10.5 M5.3,2.5 L5.3,14.5 M10.2,2.5 L10.2,14.5" stroke="#4d4d4d" stroke-width="0.8"/></g>
<g transform="translate(1467.40,291.10)"><text x="7.7" y="12.8" font-size="13" font-weight="700" fill="#2b88d8" text-anchor="middle" textLength="8" lengthAdjust="spacingAndGlyphs" style="font-family:Liberation Sans">R</text></g>
<g transform="translate(1490.50,291.10)"><text x="7.7" y="11.5" font-size="13" font-weight="700" fill="#2b88d8" text-anchor="middle" textLength="15" lengthAdjust="spacingAndGlyphs" style="font-family:Liberation Sans">Py</text></g>
<g transform="translate(1513.60,291.10)"><path d="M0.6,0 L0.6,14.6 L15.2,14.6" fill="none" stroke="#4d4d4d" stroke-width="1.2"/><path d="M1,3.2 L11,3.2" stroke="#2b7cd3" stroke-width="1"/><circle cx="12.8" cy="3.2" r="1.9" fill="#62a8e8" stroke="#2b7cd3" stroke-width="0.8"/><path d="M1,6.5 L8,6.5 L10,5.5 M1,9.8 L6,9.8 L8,9" stroke="#8a8a8a" stroke-width="0.9" fill="none"/></g>
<g transform="translate(1398.10,314.15)"><rect x="0" y="6" width="5" height="3.3" fill="#62a8e8" stroke="#2b7cd3" stroke-width="0.8"/><path d="M5,7.6 L7.5,7.6 M7.5,2.3 L7.5,12.8 M7.5,2.3 L9.5,2.3 M7.5,12.8 L9.5,12.8 M7.5,7.6 L9.5,7.6" stroke="#4d4d4d" stroke-width="0.9" fill="none"/><rect x="9.5" y="0.6" width="5.5" height="3.5" fill="#62a8e8" stroke="#2b7cd3" stroke-width="0.8"/><rect x="9.5" y="5.8" width="5.5" height="3.5" fill="#62a8e8" stroke="#2b7cd3" stroke-width="0.8"/><rect x="9.5" y="11" width="5.5" height="3.5" fill="#62a8e8" stroke="#2b7cd3" stroke-width="0.8"/></g>
<g transform="translate(1421.20,314.15)"><path d="M0.8,1.2 L15,1.2 L15,10.5 L5.5,10.5 L3,13.5 L3,10.5 L0.8,10.5 Z" fill="#fafafa" stroke="#2b7cd3" stroke-width="1.1" stroke-linejoin="round"/></g>
<g transform="translate(1444.30,314.15)"><path d="M1.5,0.8 L10,0.8 L13.5,4.3 L13.5,15 L1.5,15 Z" fill="#fafafa" stroke="#4d4d4d" stroke-width="1"/><path d="M10,0.8 L10,4.3 L13.5,4.3" fill="none" stroke="#4d4d4d" stroke-width="0.9"/><circle cx="2" cy="6.5" r="1.4" fill="#2b7cd3"/><path d="M4.5,6.5 L11,6.5 M4.5,9 L9.5,9" stroke="#62a8e8" stroke-width="1.1"/></g>
<g transform="translate(1467.40,314.15)"><path d="M3.5,0.8 L12,0.8 L12,6 Q12,10 7.75,10 Q3.5,10 3.5,6 Z" fill="#fafafa" stroke="#4d4d4d" stroke-width="1.1"/><path d="M3.5,2.5 L1,2.5 Q1,6 3.5,6.5 M12,2.5 L14.5,2.5 Q14.5,6 12,6.5" fill="none" stroke="#4d4d4d" stroke-width="1"/><rect x="3.5" y="0.6" width="8.5" height="1.8" fill="#2b7cd3"/><path d="M7.75,10 L7.75,12.5" stroke="#4d4d4d" stroke-width="1"/><rect x="4" y="12.5" width="7.5" height="2.2" rx="1" fill="#2b7cd3"/></g>
<g transform="translate(1490.50,314.15)"><path d="M1,0.8 L9.5,0.8 L13.5,4.8 L13.5,15 L1,15 Z" fill="#fafafa" stroke="#4d4d4d" stroke-width="1.1"/><path d="M9.5,0.8 L9.5,4.8 L13.5,4.8" fill="none" stroke="#4d4d4d" stroke-width="0.9"/><rect x="3" y="10" width="1.6" height="3" fill="#4d4d4d"/><rect x="6" y="11" width="1.6" height="2" fill="#4d4d4d"/><rect x="9" y="7.5" width="1.6" height="5.5" fill="#4d4d4d"/></g>
<g transform="translate(1513.60,314.15)"><path d="M1,1.5 L15,1.5 L15,9 M11.5,15 L1,15 L1,7" fill="none" stroke="#2b7cd3" stroke-width="1.4"/><path d="M3.5,13 Q6,11 7,8 Q9,4 12.5,3.5 L13,8 Q10,10 8,13 Z" fill="#62a8e8" opacity="0.8"/><path d="M0.5,0.5 L4.5,0.5 L4.5,5 L2.5,7.5 L0.5,5 Z" fill="#e06c14"/><circle cx="12.5" cy="13" r="2.3" fill="#e06c14"/><circle cx="15" cy="9.5" r="1.2" fill="#e06c14"/></g>
<g transform="translate(1398.10,337.20)"><path d="M7.6,0.5 L15,7.8 L7.6,15 L0.5,7.8 Z" fill="#fafafa" stroke="#a23fb5" stroke-width="1.1"/><path d="M4,4.3 L11.2,11.5 M11.2,4.3 L4,11.5" stroke="#a23fb5" stroke-width="0.9"/></g>
<g transform="translate(1421.20,337.20)"><path d="M0.5,1.5 L9,1.5 L15,7.8 L9,14.2 L0.5,14.2 L5.5,7.8 Z" fill="#fafafa" stroke="#2b7cd3" stroke-width="1.1" stroke-linejoin="round"/><path d="M4,13 L10.5,5.5 M7.5,13.5 L12.5,8" stroke="#2b7cd3" stroke-width="1"/></g>
<g transform="translate(1444.30,337.20)"><circle cx="3" cy="7.8" r="0.8" fill="#4d4d4d"/><circle cx="7.6" cy="7.8" r="0.8" fill="#4d4d4d"/><circle cx="12.2" cy="7.8" r="0.8" fill="#4d4d4d"/></g>
<text x="19" y="17.9" font-size="13" fill="#3b3a39" textLength="17" lengthAdjust="spacingAndGlyphs">File</text>
<text x="67" y="17.9" font-size="13" fill="#252423" stroke="#252423" stroke-width="0.35" textLength="31" lengthAdjust="spacingAndGlyphs">Home</text>
<text x="123.6" y="17.9" font-size="13" fill="#3b3a39" textLength="28.7" lengthAdjust="spacingAndGlyphs">Insert</text>
<text x="179" y="17.9" font-size="13" fill="#3b3a39" textLength="48" lengthAdjust="spacingAndGlyphs">Modeling</text>
<text x="253" y="17.9" font-size="13" fill="#3b3a39" textLength="24.5" lengthAdjust="spacingAndGlyphs">View</text>
<text x="303" y="17.9" font-size="13" fill="#3b3a39" textLength="23.8" lengthAdjust="spacingAndGlyphs">Help</text>
<text x="353.6" y="17.9" font-size="13" fill="#3b3a39" textLength="69.4" lengthAdjust="spacingAndGlyphs">External Tools</text>
<text x="11.9" y="72.7" font-size="11" fill="#b1afad" textLength="22.4" lengthAdjust="spacingAndGlyphs">Paste</text>
<text x="59.6" y="43.8" font-size="11" fill="#b1afad" textLength="14.7" lengthAdjust="spacingAndGlyphs">Cut</text>
<text x="59.6" y="62.5" font-size="11" fill="#b1afad" textLength="22.1" lengthAdjust="spacingAndGlyphs">Copy</text>
<text x="59.8" y="82.5" font-size="11" fill="#b1afad" textLength="63.2" lengthAdjust="spacingAndGlyphs">Format painter</text>
<text x="48.3" y="101.9" font-size="9.8" fill="#605e5c" textLength="34.7" lengthAdjust="spacingAndGlyphs">Clipboard</text>
<text x="147.8" y="72.7" font-size="11" fill="#4a4846" textLength="15.2" lengthAdjust="spacingAndGlyphs">Get</text>
<text x="140.9" y="85.4" font-size="11" fill="#4a4846" textLength="19.1" lengthAdjust="spacingAndGlyphs">data</text>
<text x="185.2" y="72.7" font-size="11" fill="#4a4846" textLength="20.8" lengthAdjust="spacingAndGlyphs">Excel</text>
<text x="173.9" y="85.4" font-size="11" fill="#4a4846" textLength="43.0" lengthAdjust="spacingAndGlyphs">workbook</text>
<text x="225.6" y="72.7" font-size="11" fill="#4a4846" textLength="19.5" lengthAdjust="spacingAndGlyphs">Data</text>
<text x="222.1" y="85.4" font-size="11" fill="#4a4846" textLength="16.9" lengthAdjust="spacingAndGlyphs">hub</text>
<text x="259.7" y="72.7" font-size="11" fill="#4a4846" textLength="17.4" lengthAdjust="spacingAndGlyphs">SQL</text>
<text x="255" y="85.4" font-size="11" fill="#4a4846" textLength="26.9" lengthAdjust="spacingAndGlyphs">Server</text>
<text x="290.4" y="72.7" font-size="11" fill="#4a4846" textLength="22.1" lengthAdjust="spacingAndGlyphs">Enter</text>
<text x="291.8" y="85.4" font-size="11" fill="#4a4846" textLength="18.5" lengthAdjust="spacingAndGlyphs">data</text>
<text x="319.7" y="72.7" font-size="11" fill="#4a4846" textLength="42.3" lengthAdjust="spacingAndGlyphs">Dataverse</text>
<text x="372.9" y="72.7" font-size="11" fill="#4a4846" textLength="28.5" lengthAdjust="spacingAndGlyphs">Recent</text>
<text x="366" y="85.4" font-size="11" fill="#4a4846" textLength="32.1" lengthAdjust="spacingAndGlyphs">sources</text>
<text x="266.6" y="101.9" font-size="9.8" fill="#605e5c" textLength="16.4" lengthAdjust="spacingAndGlyphs">Data</text>
<text x="425.8" y="72.7" font-size="11" fill="#4a4846" textLength="42.9" lengthAdjust="spacingAndGlyphs">Transform</text>
<text x="433" y="85.4" font-size="11" fill="#4a4846" textLength="19.5" lengthAdjust="spacingAndGlyphs">data</text>
<text x="472.4" y="72.7" font-size="11" fill="#4a4846" textLength="31.6" lengthAdjust="spacingAndGlyphs">Refresh</text>
<text x="450.7" y="101.9" font-size="9.8" fill="#605e5c" textLength="28.0" lengthAdjust="spacingAndGlyphs">Queries</text>
<text x="526" y="72.7" font-size="11" fill="#4a4846" textLength="20" lengthAdjust="spacingAndGlyphs">New</text>
<text x="524" y="85.4" font-size="11" fill="#4a4846" textLength="25" lengthAdjust="spacingAndGlyphs">visual</text>
<text x="560.4" y="72.7" font-size="11" fill="#4a4846" textLength="17.2" lengthAdjust="spacingAndGlyphs">Text</text>
<text x="561.8" y="85.4" font-size="11" fill="#4a4846" textLength="15.8" lengthAdjust="spacingAndGlyphs">box</text>
<text x="595.6" y="72.7" font-size="11" fill="#4a4846" textLength="22.1" lengthAdjust="spacingAndGlyphs">More</text>
<text x="587" y="85.4" font-size="11" fill="#4a4846" textLength="30" lengthAdjust="spacingAndGlyphs">visuals</text>
<text x="563.2" y="101.9" font-size="9.8" fill="#605e5c" textLength="20.1" lengthAdjust="spacingAndGlyphs">Insert</text>
<text x="652" y="72.7" font-size="11" fill="#4a4846" textLength="19.2" lengthAdjust="spacingAndGlyphs">New</text>
<text x="642.6" y="85.4" font-size="11" fill="#4a4846" textLength="36.7" lengthAdjust="spacingAndGlyphs">measure</text>
<text x="689.3" y="72.7" font-size="11" fill="#4a4846" textLength="24.3" lengthAdjust="spacingAndGlyphs">Quick</text>
<text x="683.6" y="85.4" font-size="11" fill="#4a4846" textLength="36.4" lengthAdjust="spacingAndGlyphs">measure</text>
<text x="659.8" y="101.9" font-size="9.8" fill="#605e5c" textLength="43.8" lengthAdjust="spacingAndGlyphs">Calculations</text>
<text x="737" y="72.7" font-size="11" fill="#b1afad" textLength="44" lengthAdjust="spacingAndGlyphs">Sensitivity</text>
<text x="740.9" y="101.9" font-size="9.8" fill="#605e5c" textLength="36.3" lengthAdjust="spacingAndGlyphs">Sensitivity</text>
<text x="798" y="72.7" font-size="11" fill="#4a4846" textLength="31.6" lengthAdjust="spacingAndGlyphs">Publish</text>
<text x="803.9" y="101.9" font-size="9.8" fill="#605e5c" textLength="20.1" lengthAdjust="spacingAndGlyphs">Share</text>
<text x="91.5" y="146.4" font-size="28" fill="#252423" textLength="237" lengthAdjust="spacingAndGlyphs" stroke="#f2f2f2" stroke-width="0.35">Job Trace Reporting</text>
<text x="88" y="224.9" font-size="16" fill="#252423" textLength="137.4" lengthAdjust="spacingAndGlyphs">Select a Request ID</text>
<text x="98.9" y="260" font-size="13.5" fill="#605e5c" textLength="14.1" lengthAdjust="spacingAndGlyphs">All</text>
<text x="181.4" y="485.8" font-size="38.5" fill="#252423" textLength="60.9" lengthAdjust="spacingAndGlyphs" stroke="#ffffff" stroke-width="0.45">65K</text>
<text x="157.5" y="515.8" font-size="16.5" fill="#605e5c" textLength="108.3" lengthAdjust="spacingAndGlyphs">Total CPU Time</text>
<text x="99.4" y="727.2" font-size="39" fill="#252423" textLength="225" lengthAdjust="spacingAndGlyphs" stroke="#ffffff" stroke-width="0.45">0 mins 27 sec</text>
<text x="181.1" y="756.5" font-size="16" fill="#605e5c" textLength="61.1" lengthAdjust="spacingAndGlyphs">Duration</text>
<text x="436.9" y="225.8" font-size="16.5" fill="#252423" textLength="82.7" lengthAdjust="spacingAndGlyphs">ExecuteSQL</text>
<text x="554.7" y="225.8" font-size="16.5" fill="#252423" textLength="53" lengthAdjust="spacingAndGlyphs">Process</text>
<text x="398.2" y="245.6" font-size="11.2" fill="#605e5c" textLength="12.8" lengthAdjust="spacingAndGlyphs">00</text>
<text x="398.2" y="263.1" font-size="11.2" fill="#605e5c" textLength="12.8" lengthAdjust="spacingAndGlyphs">01</text>
<text x="398.2" y="280.5" font-size="11.2" fill="#605e5c" textLength="12.8" lengthAdjust="spacingAndGlyphs">02</text>
<text x="398.2" y="298.0" font-size="11.2" fill="#605e5c" textLength="12.8" lengthAdjust="spacingAndGlyphs">03</text>
<text x="398.2" y="315.4" font-size="11.2" fill="#605e5c" textLength="12.8" lengthAdjust="spacingAndGlyphs">04</text>
<text x="398.2" y="332.9" font-size="11.2" fill="#605e5c" textLength="12.8" lengthAdjust="spacingAndGlyphs">05</text>
<text x="422.9" y="355" font-size="11.5" fill="#605e5c" text-anchor="middle" textLength="28.3" lengthAdjust="spacingAndGlyphs">08:25</text>
<text x="561.8" y="355" font-size="11.5" fill="#605e5c" text-anchor="middle" textLength="15.5" lengthAdjust="spacingAndGlyphs">:05</text>
<text x="700.8" y="355" font-size="11.5" fill="#605e5c" text-anchor="middle" textLength="15.5" lengthAdjust="spacingAndGlyphs">:10</text>
<text x="839.8" y="355" font-size="11.5" fill="#605e5c" text-anchor="middle" textLength="15.5" lengthAdjust="spacingAndGlyphs">:15</text>
<text x="978.7" y="355" font-size="11.5" fill="#605e5c" text-anchor="middle" textLength="15.5" lengthAdjust="spacingAndGlyphs">:20</text>
<text x="1117.7" y="355" font-size="11.5" fill="#605e5c" text-anchor="middle" textLength="15.5" lengthAdjust="spacingAndGlyphs">:25</text>
<text x="1256.6" y="355" font-size="11.5" fill="#605e5c" text-anchor="middle" textLength="15.5" lengthAdjust="spacingAndGlyphs">:30</text>
<text x="396.7" y="516.1" font-size="13.3" fill="#605e5c" textLength="74.9" lengthAdjust="spacingAndGlyphs">ObjectName</text>
<text x="799.2" y="516.1" font-size="13.3" fill="#605e5c" textLength="64.1" lengthAdjust="spacingAndGlyphs">Rows Read</text>
<text x="881.4" y="516.1" font-size="13.3" fill="#605e5c" textLength="168.8" lengthAdjust="spacingAndGlyphs">Duration Measure (Seconds)</text>
<text x="1062.2" y="516.1" font-size="13.3" fill="#605e5c" textLength="100.1" lengthAdjust="spacingAndGlyphs">Rows per second</text>
<text x="396.9" y="546" font-size="13.3" fill="#323130" textLength="314.3" lengthAdjust="spacingAndGlyphs">Customer-156496f7-4dcd-4ba4-902e-6b7f60351058</text>
<text x="870.2" y="546" font-size="13.3" fill="#323130" text-anchor="end" textLength="39.0" lengthAdjust="spacingAndGlyphs">18,869</text>
<text x="396.9" y="567.2" font-size="13.3" fill="#323130" textLength="359.2" lengthAdjust="spacingAndGlyphs">Product Category-4f19d1c8-6090-4500-9b89-aeb399c69f75</text>
<text x="870.2" y="567.2" font-size="13.3" fill="#323130" text-anchor="end" textLength="6.9" lengthAdjust="spacingAndGlyphs">8</text>
<text x="1050.2" y="567.2" font-size="13.3" fill="#323130" text-anchor="end" textLength="5.2" lengthAdjust="spacingAndGlyphs">1</text>
<text x="1163.5" y="567.2" font-size="13.3" fill="#323130" text-anchor="end" textLength="25.4" lengthAdjust="spacingAndGlyphs">8.00</text>
<text x="396.9" y="588.5" font-size="13.3" fill="#323130" textLength="389.6" lengthAdjust="spacingAndGlyphs">Product Subcategory-b3d09b7b-27b6-496a-ada3-7635e28514ed</text>
<text x="870.2" y="588.5" font-size="13.3" fill="#323130" text-anchor="end" textLength="14.7" lengthAdjust="spacingAndGlyphs">44</text>
<text x="1050.2" y="588.5" font-size="13.3" fill="#323130" text-anchor="end" textLength="5.2" lengthAdjust="spacingAndGlyphs">1</text>
<text x="1163.5" y="588.5" font-size="13.3" fill="#323130" text-anchor="end" textLength="34.4" lengthAdjust="spacingAndGlyphs">44.00</text>
<text x="396.9" y="609.8" font-size="13.3" fill="#323130" textLength="310.8" lengthAdjust="spacingAndGlyphs">Geography-794a26db-cc4c-4fa7-8fae-e45063ff19c6</text>
<text x="870.2" y="609.8" font-size="13.3" fill="#323130" text-anchor="end" textLength="21.3" lengthAdjust="spacingAndGlyphs">674</text>
<text x="1050.2" y="609.8" font-size="13.3" fill="#323130" text-anchor="end" textLength="5.2" lengthAdjust="spacingAndGlyphs">1</text>
<text x="1163.5" y="609.8" font-size="13.3" fill="#323130" text-anchor="end" textLength="39.2" lengthAdjust="spacingAndGlyphs">674.00</text>
<text x="396.9" y="631" font-size="13.3" fill="#323130" textLength="302.6" lengthAdjust="spacingAndGlyphs">Product-243a5d1e-6df5-4f12-ab27-828062044363</text>
<text x="870.2" y="631" font-size="13.3" fill="#323130" text-anchor="end" textLength="32.0" lengthAdjust="spacingAndGlyphs">2,517</text>
<text x="1050.2" y="631" font-size="13.3" fill="#323130" text-anchor="end" textLength="5.2" lengthAdjust="spacingAndGlyphs">1</text>
<text x="1163.5" y="631" font-size="13.3" fill="#323130" text-anchor="end" textLength="49.9" lengthAdjust="spacingAndGlyphs">2,517.00</text>
<text x="396.9" y="652.2" font-size="13.3" fill="#323130" textLength="323.7" lengthAdjust="spacingAndGlyphs">Online Sales-f0adbb56-39d4-4bca-8c9c-25273770fafa</text>
<text x="870.2" y="652.2" font-size="13.3" fill="#323130" text-anchor="end" textLength="63.5" lengthAdjust="spacingAndGlyphs">12,627,608</text>
<text x="1050.2" y="652.2" font-size="13.3" fill="#323130" text-anchor="end" textLength="14.3" lengthAdjust="spacingAndGlyphs">27</text>
<text x="1163.5" y="652.2" font-size="13.3" fill="#ffffff" text-anchor="end" textLength="64.6" lengthAdjust="spacingAndGlyphs">467,689.19</text>
<text x="397.2" y="673.5" font-size="13.3" fill="#323130" font-weight="700" textLength="30.3" lengthAdjust="spacingAndGlyphs">Total</text>
<text x="870.2" y="673.5" font-size="13.3" fill="#323130" font-weight="700" text-anchor="end" textLength="69.4" lengthAdjust="spacingAndGlyphs">12,649,720</text>
<text x="1050.2" y="673.5" font-size="13.3" fill="#323130" font-weight="700" text-anchor="end" textLength="15" lengthAdjust="spacingAndGlyphs">27</text>
<text x="1163.5" y="673.5" font-size="13.3" fill="#323130" font-weight="700" text-anchor="end" textLength="70.1" lengthAdjust="spacingAndGlyphs">468,508.15</text>
<text x="0" y="0" font-size="12.5" fill="#252423" stroke="#252423" stroke-width="0.1" textLength="34.4" lengthAdjust="spacingAndGlyphs" transform="translate(1371.2,155.5) rotate(90)">Filters</text>
<text x="1396.6" y="124.8" font-size="12.8" fill="#252423" stroke="#252423" stroke-width="0.35" textLength="80.8" lengthAdjust="spacingAndGlyphs">Visualizations</text>
<text x="1396.6" y="145.5" font-size="10.2" fill="#323130" stroke="#323130" stroke-width="0.35" textLength="50.7" lengthAdjust="spacingAndGlyphs">Build visual</text>
<text x="1399.8" y="409.7" font-size="10.3" fill="#323130" textLength="27.5" lengthAdjust="spacingAndGlyphs">Values</text>
<text x="1402.3" y="432.6" font-size="10.8" fill="#323130" textLength="87.2" lengthAdjust="spacingAndGlyphs">Add data fields here</text>
<text x="1399.8" y="458.8" font-size="10.5" fill="#323130" stroke="#323130" stroke-width="0.35" textLength="57" lengthAdjust="spacingAndGlyphs">Drill through</text>
<text x="1399.8" y="480.1" font-size="10.5" fill="#323130" textLength="54" lengthAdjust="spacingAndGlyphs">Cross-report</text>
<text x="1517.6" y="480.3" font-size="7.5" fill="#605e5c" textLength="11.5" lengthAdjust="spacingAndGlyphs">Off</text>
<text x="1399.8" y="502.2" font-size="10.5" fill="#323130" textLength="60.6" lengthAdjust="spacingAndGlyphs">Keep all filters</text>
<text x="1510" y="502.1" font-size="7.5" fill="#ffffff" textLength="10" lengthAdjust="spacingAndGlyphs">On</text>
<text x="1400.6" y="527.9" font-size="10.8" fill="#323130" textLength="123.6" lengthAdjust="spacingAndGlyphs">Add drill-through fields here</text>
<text x="83.8" y="857.2" font-size="11" fill="#323130" textLength="59.5" lengthAdjust="spacingAndGlyphs">Refresh Times</text>
<text x="177.6" y="857.2" font-size="11" fill="#252423" stroke="#252423" stroke-width="0.35" textLength="69" lengthAdjust="spacingAndGlyphs">Using Slot Data</text>
<text x="4.4" y="882" font-size="10.8" fill="#605e5c" textLength="48.4" lengthAdjust="spacingAndGlyphs">Page 2 of 2</text>
</svg>
</body></html>
